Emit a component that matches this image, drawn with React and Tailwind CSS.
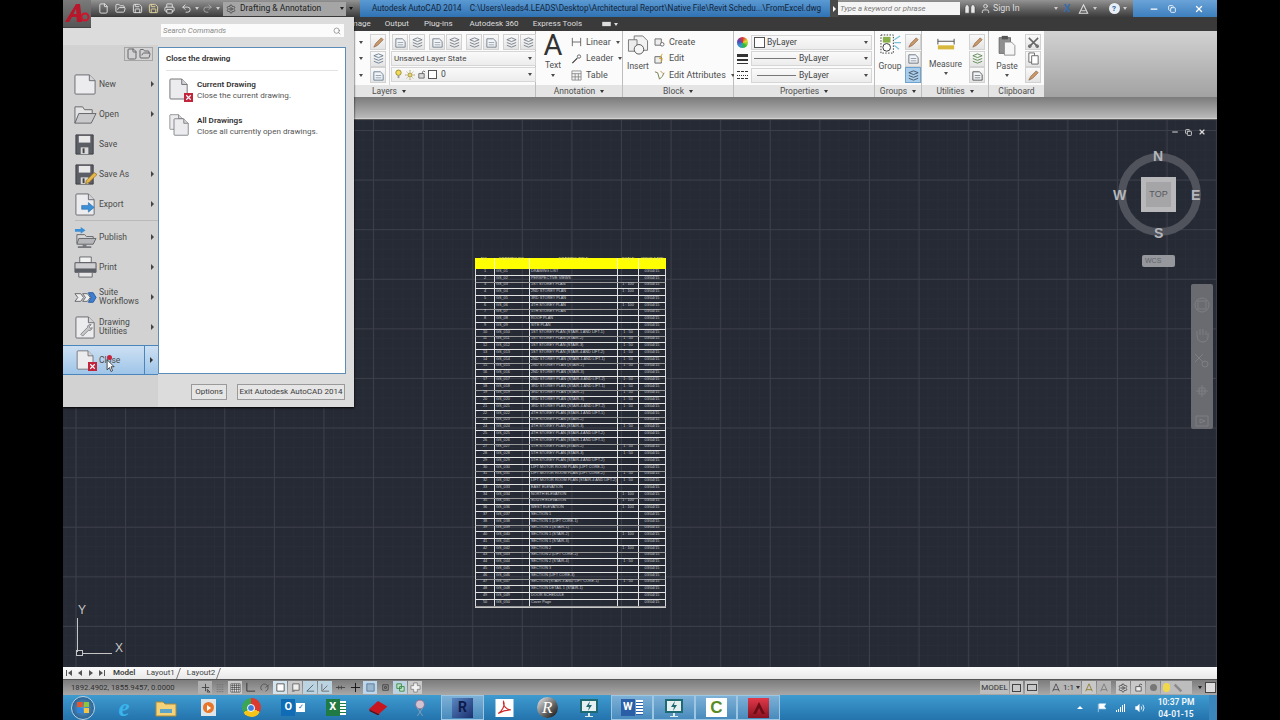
import {
  File, FolderOpen, Save, Printer, Undo2, Redo2, Settings, Search, User, Minus, X, Copy,
} from "lucide-react";

const sheets = [
  [1, "GS_01", "DRAWING LIST", ""],
  [2, "GS_02", "PERSPECTIVE VIEWS", ""],
  [3, "GS_03", "1ST STOREY PLAN", "1 : 100"],
  [4, "GS_04", "2ND STOREY PLAN", "1 : 100"],
  [5, "GS_05", "3RD STOREY PLAN", ""],
  [6, "GS_06", "4TH STOREY PLAN", "1 : 100"],
  [7, "GS_07", "5TH STOREY PLAN", ""],
  [8, "GS_08", "ROOF PLAN", ""],
  [9, "GS_09", "SITE PLAN", ""],
  [10, "GS_010", "1ST STOREY PLAN (STAIR-1 AND LIFT-1)", "1 : 50"],
  [11, "GS_011", "1ST STOREY PLAN (STAIR-2)", "1 : 50"],
  [12, "GS_012", "1ST STOREY PLAN (STAIR-3)", "1 : 50"],
  [13, "GS_013", "1ST STOREY PLAN (STAIR-4 AND LIFT-2)", "1 : 50"],
  [14, "GS_014", "2ND STOREY PLAN (STAIR-1 AND LIFT-1)", "1 : 50"],
  [15, "GS_015", "2ND STOREY PLAN (STAIR-2)", "1 : 50"],
  [16, "GS_016", "2ND STOREY PLAN (STAIR-3)", ""],
  [17, "GS_017", "2ND STOREY PLAN (STAIR-4 AND LIFT-2)", "1 : 50"],
  [18, "GS_018", "3RD STOREY PLAN (STAIR-1 AND LIFT-1)", "1 : 50"],
  [19, "GS_019", "3RD STOREY PLAN (STAIR-2)", "1 : 50"],
  [20, "GS_020", "3RD STOREY PLAN (STAIR-3)", "1 : 50"],
  [21, "GS_021", "3RD STOREY PLAN (STAIR-4 AND LIFT-2)", "1 : 50"],
  [22, "GS_022", "4TH STOREY PLAN (STAIR-1 AND LIFT-1)", ""],
  [23, "GS_023", "4TH STOREY PLAN (STAIR-2)", ""],
  [24, "GS_024", "4TH STOREY PLAN (STAIR-3)", "1 : 50"],
  [25, "GS_025", "4TH STOREY PLAN (STAIR-4 AND LIFT-2)", ""],
  [26, "GS_026", "5TH STOREY PLAN (STAIR-1 AND LIFT-1)", ""],
  [27, "GS_027", "5TH STOREY PLAN (STAIR-2)", "1 : 50"],
  [28, "GS_028", "5TH STOREY PLAN (STAIR-3)", "1 : 50"],
  [29, "GS_029", "5TH STOREY PLAN (STAIR-4 AND LIFT-2)", ""],
  [30, "GS_030", "LIFT MOTOR ROOM PLAN (LIFT CORE-1)", ""],
  [31, "GS_031", "LIFT MOTOR ROOM PLAN (LIFT CORE-2)", "1 : 50"],
  [32, "GS_032", "LIFT MOTOR ROOM PLAN (STAIR-4 AND LIFT-2)", "1 : 50"],
  [33, "GS_033", "EAST ELEVATION", ""],
  [34, "GS_034", "NORTH ELEVATION", "1 : 100"],
  [35, "GS_035", "SOUTH ELEVATION", "1 : 100"],
  [36, "GS_036", "WEST ELEVATION", "1 : 100"],
  [37, "GS_037", "SECTION 1", ""],
  [38, "GS_038", "SECTION 1 (LIFT CORE-1)", ""],
  [39, "GS_039", "SECTION 1 (STAIR-1)", ""],
  [40, "GS_040", "SECTION 1 (STAIR-2)", "1 : 100"],
  [41, "GS_041", "SECTION 1 (STAIR-3)", ""],
  [42, "GS_042", "SECTION 2", "1 : 100"],
  [43, "GS_043", "SECTION 2 (LIFT CORE-2)", ""],
  [44, "GS_044", "SECTION 2 (STAIR-4)", "1 : 50"],
  [45, "GS_045", "SECTION 3", ""],
  [46, "GS_046", "SECTION (LIFT CORE-3)", ""],
  [47, "GS_047", "SECTION (STAIR-3 AND LIFT CORE-1)", "1 : 50"],
  [48, "GS_048", "SECTION DETAIL 1 (STAIR-1)", ""],
  [49, "GS_049", "DOOR SCHEDULE", ""],
  [50, "GS_050", "Cover Page", ""],
];

// page with a folded corner, used all over the application menu
function Doc({ className = "", children }) {
  return (
    <svg viewBox="0 0 22 24" className={className}>
      <path d="M2 1h12l6 6v15a1 1 0 0 1-1 1H2a1 1 0 0 1-1-1V2a1 1 0 0 1 1-1z" fill="#ececef" stroke="#6a6b70" />
      <path d="M14 1v6h6" fill="#d4d4d8" stroke="#6a6b70" />
      {children}
    </svg>
  );
}

function RedX({ className = "" }) {
  return (
    <svg viewBox="0 0 10 10" className={className}>
      <rect width="10" height="10" fill="#c2243c" />
      <path d="M2.5 2.5l5 5M7.5 2.5l-5 5" stroke="#fff" strokeWidth="1.2" />
    </svg>
  );
}

function MenuIcon({ name }) {
  const c = "w-[23px] h-[23px]";
  if (name === "New")
    return (
      <svg viewBox="0 0 24 22" className={c}>
        <path d="M2 1h14l6 6v13a1 1 0 0 1-1 1H2a1 1 0 0 1-1-1V2a1 1 0 0 1 1-1z" fill="#ececef" stroke="#6a6b70" />
        <path d="M16 1v6h6" fill="#d4d4d8" stroke="#6a6b70" />
      </svg>
    );
  if (name === "Open")
    return (
      <svg viewBox="0 0 24 24" className={c}>
        <path d="M1 4h8l2 3h8v4H6L1 21z" fill="#e4e4e4" stroke="#66676c" />
        <path d="M5 11h18l-5 10H1z" fill="#c9c9cc" stroke="#66676c" />
      </svg>
    );
  if (name === "Save" || name === "Save As")
    return (
      <svg viewBox="0 0 24 24" className={c}>
        <path d="M2 2h18v20H2z" fill="#5c5e66" stroke="#3e3f44" />
        <path d="M5 3h12v7H5z" fill="#e8e8e8" />
        <path d="M7 15h8v7H7z" fill="#dadada" />
        <path d="M9 16h2v5H9z" fill="#444" />
        {name === "Save As" && <path d="M12 22l1-4 8-8 3 2-8 8z" fill="#e9b64a" stroke="#8a6a20" strokeWidth="0.7" />}
      </svg>
    );
  if (name === "Export")
    return (
      <Doc className={c}>
        <path d="M7 13h7v-3l6 5-6 5v-3H7z" fill="#3d8fd6" stroke="#1f6aa8" strokeWidth="0.6" />
      </Doc>
    );
  if (name === "Publish")
    return (
      <svg viewBox="0 0 24 24" className={c}>
        <path d="M3 9h8l2 2h7v7H3z" fill="#d8d8d8" stroke="#66676c" />
        <path d="M5 13h18l-3 6H3z" fill="#b6b7bb" stroke="#66676c" />
        <path d="M1 3h6V1l5 3.500-5 3.500V6H1z" fill="#3d8fd6" />
        <path d="M4 21h14v2H4zM9 19h4v2H9z" fill="#77787d" />
      </svg>
    );
  if (name === "Print")
    return (
      <svg viewBox="0 0 24 24" className={c}>
        <path d="M6 1h12v6H6z" fill="#f2f2f2" stroke="#66676c" />
        <path d="M1 7h22v10H1z" fill="#cfcfd2" stroke="#55565b" />
        <path d="M1 13h22v4H1z" fill="#5c5e66" />
        <path d="M5 17h14v5H5z" fill="#e6e6e6" stroke="#66676c" />
      </svg>
    );
  if (name === "Suite")
    return (
      <svg viewBox="0 0 24 14" className={c}>
        <path d="M1 3h6l3 4-3 4H1l3-4z" fill="#eee" stroke="#66676c" />
        <path d="M9 3h5l3 4-3 4H9l3-4z" fill="#eee" stroke="#66676c" />
        <path d="M15 2h5l3 5-3 5h-5l3-5z" fill="#3f7fd0" stroke="#2a5ea6" />
      </svg>
    );
  if (name === "Drawing")
    return (
      <Doc className={c}>
        <path d="M6 19l7-7a3 3 0 0 1 4-3l-2 2 1 2 2-1a3 3 0 0 1-4 3l-6 6z" fill="#c8c8cc" stroke="#66676c" strokeWidth="0.7" />
      </Doc>
    );
  return null;
}

const menuTop = [["New", "New", 1], ["Open", "Open", 1], ["Save", "Save", 0], ["Save As", "Save As", 1], ["Export", "Export", 1]];
const menuBottom = [
  ["Publish", ["Publish"], 1],
  ["Print", ["Print"], 1],
  ["Suite", ["Suite", "Workflows"], 1],
  ["Drawing", ["Drawing", "Utilities"], 1],
];

function MenuRow({ icon, lines, arrow }) {
  const list = Array.isArray(lines) ? lines : [lines];
  return (
    <div className="flex h-[30px] items-center pl-[9px] pr-[4px]">
      <div className="flex w-[26px] justify-center"><MenuIcon name={icon} /></div>
      <div className="ml-[1px] flex-1 text-[8.5px] leading-[9px] text-[#4b4b4b]">
        {list.map((l) => <div key={l}>{l}</div>)}
      </div>
      {arrow ? <div className="h-0 w-0 border-y-[3px] border-l-[3px] border-y-transparent border-l-[#444]" /> : null}
    </div>
  );
}

function AppMenu() {
  return (
    <div className="absolute left-0 top-0 z-20 h-[407px] w-[291px]">
      <div className="flex h-[28px] w-[28px] items-center justify-center border-b border-[#444] bg-linear-to-b from-[#7a7a7a] to-[#565656]">
        <svg viewBox="0 0 28 24" className="h-[26px] w-[28px]">
          <path d="M2 20L13 2h4l2 18h-5l-.6-5H9l-3 5z" fill="#b8162a" />
          <path d="M10.500 12h3l-.5-5z" fill="#6b6b6b" />
          <circle cx="22" cy="15" r="3.500" fill="none" stroke="#d0142a" strokeWidth="2" />
        </svg>
      </div>
      <div className="absolute inset-x-0 bottom-0 top-[17px] -z-10 bg-[#dcdcdc] shadow-[0_1px_2px_#000]" />
      <div className="absolute inset-y-0 left-0 top-[45px] -z-10 w-[95px] bg-[#d2d2d2]" />
      <div className="absolute left-[98px] top-[24px] flex h-[13px] w-[183px] items-center justify-between bg-[#fbfbfb] pl-[2px] pr-[3px]">
        <span className="text-[7.700px] italic text-[#8a8a8a]">Search Commands</span>
        <Search size={8} className="text-[#777]" />
      </div>

      <div className="absolute inset-y-0 left-0 top-[28px] w-[95px] pt-[41px]">
        <div className="absolute right-[5px] top-[19px] flex h-[14px] gap-px border border-[#a5a5a5] bg-[#d2d2d2] px-px">
          <File size={12} className="text-[#66676c]" />
          <FolderOpen size={12} className="text-[#66676c]" />
        </div>
        {menuTop.map(([icon, label, arrow]) => <MenuRow key={icon} icon={icon} lines={label} arrow={arrow} />)}
        <div className="ml-[12px] mt-px h-[1px] bg-[#b9b9b9]" />
        <div className="h-[1px]" />
        {menuBottom.map(([icon, lines, arrow]) => <MenuRow key={icon} icon={icon} lines={lines} arrow={arrow} />)}
        <div className="relative mt-[3px] flex h-[30px] border-y border-[#4a86bb] bg-linear-to-b from-[#cde0f3] to-[#9fc5e8] pl-[9px]">
          <div className="relative flex w-[26px] items-center justify-center">
            <Doc className="h-[20px] w-[19px]" />
            <RedX className="absolute bottom-[3px] right-[1px] h-[9px] w-[9px]" />
          </div>
          <div className="ml-[1px] flex flex-1 items-center text-[8.5px] text-[#4b4b4b]">Close</div>
          <div className="flex w-[14px] items-center justify-center border-l border-[#4a86bb]">
            <div className="h-0 w-0 border-y-[3px] border-l-[3px] border-y-transparent border-l-[#333]" />
          </div>
          <div className="absolute left-[44px] top-[9px] h-[5px] w-[5px] rounded-full bg-[#c8243c]" />
          <svg viewBox="0 0 12 18" className="absolute left-[43px] top-[13px] h-[14px] w-[10px]">
            <path d="M1 1v13l3-3 2 5 2-1-2-5h4z" fill="#fff" stroke="#222" />
          </svg>
        </div>
      </div>

      <div className="absolute left-[95px] top-[47px] h-[327px] w-[188px] border border-[#5b8db8] bg-white px-[7px]">
        <div className="flex h-[23px] items-center border-b border-[#e2e2e2] text-[8px] font-semibold text-[#2f2f2f]">Close the drawing</div>
        <div className="mt-[5px] flex h-[28px] items-center pl-[3px]">
          <div className="relative h-[24px] w-[24px]">
            <Doc className="h-[22px] w-[20px]" />
            <RedX className="absolute bottom-0 right-0 h-[9px] w-[9px]" />
          </div>
          <div className="ml-[4px] text-[8.100px] leading-[11px]">
            <div className="font-semibold text-[#333]">Current Drawing</div>
            <div className="text-[#555]">Close the current drawing.</div>
          </div>
        </div>
        <div className="mt-[8px] flex h-[28px] items-center pl-[3px]">
          <div className="relative h-[24px] w-[24px]">
            <Doc className="absolute left-0 top-0 h-[16px] w-[15px]" />
            <Doc className="absolute left-[4px] top-[4px] h-[18px] w-[17px]" />
          </div>
          <div className="ml-[4px] text-[8.100px] leading-[11px]">
            <div className="font-semibold text-[#333]">All Drawings</div>
            <div className="text-[#555]">Close all currently open drawings.</div>
          </div>
        </div>
      </div>

      <div className="absolute left-[128px] top-[384px] flex gap-[10px] text-[8px] text-[#3b3b3b]">
        <div className="flex h-[16px] w-[36px] items-center justify-center border border-[#9a9a9a] bg-[#e6e6e6]">Options</div>
        <div className="flex h-[16px] w-[108px] items-center justify-center whitespace-nowrap border border-[#9a9a9a] bg-[#e6e6e6]">Exit Autodesk AutoCAD 2014</div>
      </div>
    </div>
  );
}

function Caret({ className = "border-t-[#4a4a4a]" }) {
  return <span className={`inline-block h-0 w-0 border-x-[2.500px] border-t-[3px] border-x-transparent ${className}`} />;
}

// small square toolbar button on the ribbon
function Tile({ active, children }) {
  return (
    <div className={`flex h-[16px] w-[16px] items-center justify-center border ${active ? "border-[#6ea3cf] bg-[#a9cdec]" : "border-[#d2d2d2] bg-linear-to-b from-[#fafafa] to-[#e4e4e4]"}`}>
      {children}
    </div>
  );
}

function Glyph({ color = "#6a7480", kind = "box" }) {
  if (kind === "layer")
    return (
      <svg viewBox="0 0 14 14" className="h-[13px] w-[13px]">
        <path d="M2 4l5-2 5 2-5 2zM2 7l5 2 5-2M2 10l5 2 5-2" fill="none" stroke={color} />
      </svg>
    );
  if (kind === "cross")
    return (
      <svg viewBox="0 0 14 14" className="h-[13px] w-[13px]">
        <path d="M2 2l10 10M12 2L2 12" stroke={color} strokeWidth="1.600" />
        <circle cx="3" cy="11" r="1.500" fill="none" stroke={color} />
        <circle cx="11" cy="11" r="1.500" fill="none" stroke={color} />
      </svg>
    );
  if (kind === "pages")
    return (
      <svg viewBox="0 0 14 14" className="h-[13px] w-[13px]">
        <path d="M2 1h6v10H2z" fill="#fff" stroke={color} />
        <path d="M5 4h7v9H5z" fill="#fff" stroke={color} />
      </svg>
    );
  if (kind === "pen")
    return (
      <svg viewBox="0 0 14 14" className="h-[13px] w-[13px]">
        <path d="M2 12l2-4 6-6 2 2-6 6z" fill="#c89a6a" stroke="#8a5a3a" strokeWidth="0.7" />
      </svg>
    );
  return (
    <svg viewBox="0 0 14 14" className="h-[13px] w-[13px]">
      <path d="M2 3h7l3 3v6H2z" fill="#f0f4f8" stroke={color} />
      <path d="M4 7h6M4 9.500h6" stroke={color} strokeWidth="0.7" />
    </svg>
  );
}

function Combo({ className = "", children }) {
  return (
    <div className={`flex h-[15px] items-center justify-between border border-[#d6d6d6] bg-linear-to-b from-[#fafafa] to-[#ececec] pl-[2px] pr-[3px] ${className}`}>
      <div className="flex min-w-0 flex-1 items-center gap-[2px]">{children}</div>
      <Caret />
    </div>
  );
}

function Panel({ title, width, children, more }) {
  return (
    <div className={`flex flex-col border-r border-[#bdbdbd] bg-[#fbfbfb] ${width}`}>
      <div className="flex h-[54px]">{children}</div>
      <div className="flex h-[12px] flex-none items-center justify-center gap-[5px] bg-[#e4e4e4] text-[8.500px] text-[#4f4f4f]">
        {title}
        {more ? <Caret className="border-t-[#333]" /> : null}
      </div>
    </div>
  );
}

function LineRow({ label, icon, tail }) {
  return (
    <div className="flex h-[16.500px] items-center gap-[3px] whitespace-nowrap text-[9px] text-[#505050]">
      <div className="flex w-[13px] justify-center">{icon}</div>
      {label}
      {tail ? <Caret className="ml-[2px]" /> : null}
    </div>
  );
}

function TitleBar() {
  return (
    <div className="flex h-[17px] flex-none items-center bg-linear-to-b from-[#939393] to-[#3c3c3c]">
      <div className="flex w-[297px] flex-none items-center pl-[35px] text-[#e4e4e4]">
        <File size={11} />
        <FolderOpen size={11} className="ml-[6px]" />
        <Save size={11} className="ml-[6px]" />
        <Save size={11} className="ml-[5px] text-[#e7d9a2]" />
        <Printer size={11} className="ml-[5px]" />
        <Undo2 size={11} className="ml-[6px]" />
        <Caret className="ml-[3px] border-t-[#ccc]" />
        <Redo2 size={11} className="ml-[3px] text-[#aaa]" />
        <Caret className="ml-[3px] border-t-[#ccc]" />
        <div className="ml-[3px] flex h-[14px] w-[123px] flex-none items-center gap-[4px] bg-[#a5a5a5] pl-[3px] pr-[2px] text-[8.500px] text-[#222]">
          <Settings size={10} className="text-[#444]" />
          <span className="flex-1 whitespace-nowrap">Drafting &amp; Annotation</span>
          <Caret className="border-t-[#222]" />
        </div>
        <Caret className="ml-[3px] border-t-[#111]" />
      </div>
      <div className="flex h-full w-[470px] flex-none items-center overflow-hidden whitespace-nowrap bg-linear-to-b from-[#5b9ad3] to-[#2f72b3] pl-[12px] text-[8.160px] text-[#14253a]">
        <span>Autodesk AutoCAD 2014</span>
        <span className="ml-[8px]">C:\Users\leads4.LEADS\Desktop\Architectural Report\Native File\Revit Schedu...\FromExcel.dwg</span>
      </div>
      <div className="flex h-full w-[8px] flex-none items-center justify-center bg-[#4a4a4a]">
        <div className="h-0 w-0 border-y-[3px] border-l-[3px] border-y-transparent border-l-white" />
      </div>
      <div className="flex h-[13px] w-[122px] flex-none items-center overflow-hidden whitespace-nowrap bg-[#f4f4f4] pl-[2px] text-[7.800px] italic text-[#7a7a7a]">Type a keyword or phrase</div>
      <div className="flex flex-1 items-center pl-[4px] text-[#ddd]">
        <svg viewBox="0 0 14 12" className="h-[10px] w-[12px]">
          <path d="M1 11V4l1-3h3l1 3v7zM8 11V4l1-3h3l1 3v7z" fill="#e8e8e8" stroke="#333" strokeWidth="0.6" />
        </svg>
        <User size={11} className="ml-[4px]" />
        <span className="ml-[2px] text-[8.800px]">Sign In</span>
        <Caret className="ml-[34px] border-t-[#ccc]" />
        <span className="ml-[6px] text-[11px] font-bold leading-none text-[#3b6aa8]">X</span>
        <svg viewBox="0 0 12 12" className="ml-[7px] h-[10px] w-[11px]"><path d="M6 1l5 10H1zM3.500 8h5" fill="none" stroke="#ddd" strokeWidth="1.300" /></svg>
        <Caret className="ml-[4px] border-t-[#ccc]" />
        <div className="ml-[12px] flex h-[11px] w-[11px] items-center justify-center rounded-full bg-[#e8eef5] text-[8px] font-bold text-[#2b5f9e]">?</div>
        <Caret className="ml-[3px] border-t-[#ccc]" />
      </div>
      <div className="flex h-full w-[84px] flex-none items-center bg-linear-to-b from-[#6aa3d8] to-[#3d7fbe] pl-[16px] text-white">
        <Minus size={10} strokeWidth={3} />
        <Copy size={8} strokeWidth={2.500} className="ml-[9px]" />
        <X size={10} strokeWidth={3} className="ml-[18px]" />
      </div>
    </div>
  );
}

function Ribbon() {
  return (
    <>
      <div className="flex h-[14px] flex-none items-center whitespace-nowrap bg-[#3a3a3a] pl-[279px] text-[8px] text-[#dddddd]">
        <span>Manage</span>
        <span className="ml-[14px]">Output</span>
        <span className="ml-[15px]">Plug-ins</span>
        <span className="ml-[17px]">Autodesk 360</span>
        <span className="ml-[14px]">Express Tools</span>
        <svg viewBox="0 0 10 7" className="ml-[20px] h-[6px] w-[9px]"><path d="M0 1h10v5H0z" fill="#ddd" /></svg>
        <Caret className="ml-[3px] border-t-[#ddd]" />
      </div>
      <div className="flex h-[66px] flex-none bg-linear-to-b from-[#d2d2d2] to-[#a2a2a2]">
        <div className="w-[180px] flex-none bg-[#fbfbfb]" />
        <Panel title="Layers" more width="w-[293px]">
          <div className="flex w-[146px] flex-none flex-col items-end pr-[3px] pt-[3px]">
            {["pen", "layer", "box"].map((k) => (
              <div key={k} className="flex h-[16.500px] items-center gap-[7px]">
                <Caret />
                <Tile><Glyph kind={k} color="#6b7f92" /></Tile>
              </div>
            ))}
          </div>
          <div className="flex flex-1 flex-col border-l border-[#d6d6d6] pl-[1px] pr-[1px] pt-[3px]">
            <div className="flex h-[16px] gap-[1px] pl-[1px]">
              {["box", "layer", "box", "layer", "layer", "box", "layer", "layer"].map((k, i) => (
                <div key={i} className={i === 2 || i === 4 || i === 6 ? "ml-[3px]" : ""}><Tile><Glyph kind={k} color="#77808a" /></Tile></div>
              ))}
            </div>
            <Combo className="mt-[1px] whitespace-nowrap text-[8px] text-[#444]">Unsaved Layer State</Combo>
            <Combo className="mt-[1px] text-[8.500px] text-[#444]">
              <svg viewBox="0 0 10 12" className="h-[11px] w-[9px]"><circle cx="5" cy="4" r="3" fill="#f2da58" stroke="#9a8a2a" /><path d="M4 7v3h2V7" fill="#999" /></svg>
              <svg viewBox="0 0 12 12" className="h-[10px] w-[10px]"><circle cx="6" cy="6" r="2.500" fill="#e8d27a" stroke="#9a8a2a" /><path d="M6 0v2M6 10v2M0 6h2M10 6h2M2 2l1 1M9 9l1 1M2 10l1-1M9 3l1-1" stroke="#a59a5a" /></svg>
              <svg viewBox="0 0 10 10" className="h-[9px] w-[9px]"><path d="M2 4h6v5H2z" fill="#d9d9d9" stroke="#666" /><path d="M6 4V2a2 2 0 0 1 3 0" fill="none" stroke="#666" /></svg>
              <span className="h-[9px] w-[9px] border border-[#555] bg-white" />
              <span className="ml-[2px]">0</span>
            </Combo>
          </div>
        </Panel>
        <Panel title="Annotation" more width="w-[87px]">
          <div className="relative w-[34px] flex-none text-center text-[8.500px] text-[#505050]">
            <span className="absolute inset-x-0 top-[-1px] text-[29px] leading-[30px] text-[#333]">A</span>
            <span className="absolute inset-x-0 top-[29px] leading-[10px]">Text</span>
            <span className="absolute inset-x-0 top-[40px] leading-[6px]"><Caret /></span>
          </div>
          <div className="pt-[3px]">
            <LineRow label="Linear" tail icon={<svg viewBox="0 0 12 12" className="h-[10px] w-[11px]"><path d="M1 1v10M11 1v10M1 6h10" stroke="#555" fill="none" /></svg>} />
            <LineRow label="Leader" tail icon={<svg viewBox="0 0 12 12" className="h-[10px] w-[11px]"><path d="M1 11l6-6" stroke="#333" strokeWidth="1.300" /><circle cx="9" cy="3" r="2" fill="none" stroke="#555" /></svg>} />
            <LineRow label="Table" icon={<svg viewBox="0 0 12 12" className="h-[11px] w-[11px]"><path d="M1 1h10v10H1zM1 4h10M1 7.500h10M4.500 4v7M8 4v7" fill="#f4f4f4" stroke="#777" strokeWidth="0.8" /></svg>} />
          </div>
        </Panel>
        <Panel title="Block" more width="w-[111px]">
          <div className="flex w-[30px] flex-none flex-col items-center pt-[4px] text-[8.500px] text-[#505050]">
            <svg viewBox="0 0 22 22" className="h-[21px] w-[22px]">
              <path d="M7 1h9l5 5v10H7z" fill="#f2f2f2" stroke="#777" />
              <path d="M1 5h9v12H1z" fill="#ececec" stroke="#777" />
              <circle cx="12" cy="15" r="5" fill="#f6f6f6" stroke="#555" />
            </svg>
            <span className="mt-[5px] leading-[10px]">Insert</span>
          </div>
          <div className="pt-[3px]">
            <LineRow label="Create" icon={<svg viewBox="0 0 12 10" className="h-[9px] w-[11px]"><path d="M1 1h7v7H1z" fill="#eee" stroke="#666" /><circle cx="9" cy="7" r="2" fill="#fff" stroke="#666" /></svg>} />
            <LineRow label="Edit" icon={<svg viewBox="0 0 12 12" className="h-[11px] w-[11px]"><path d="M1 4h7v7H1z" fill="#eee" stroke="#666" /><path d="M9 1l-3 5h3l-1 4" fill="none" stroke="#d2a21e" /></svg>} />
            <LineRow label="Edit Attributes" tail icon={<svg viewBox="0 0 12 12" className="h-[11px] w-[11px]"><path d="M1 2l3 1 2 7 3-3 2-4" fill="none" stroke="#6f7a40" /><path d="M7 1l3 3" stroke="#c08a30" /></svg>} />
          </div>
        </Panel>
        <Panel title="Properties" more width="w-[141px]">
          <div className="flex w-full flex-col pr-[2px] pt-[3px]">
            {[0, 1, 2].map((i) => (
              <div key={i} className="flex h-[16.500px] items-center">
                <div className="flex w-[17px] flex-none justify-center">
                  {i === 0 && <div className="h-[11px] w-[11px] rounded-full bg-[conic-gradient(#d33,#dd3,#3b3,#39c,#54b,#d33)]" />}
                  {i === 1 && <div className="flex h-[10px] w-[11px] flex-col justify-between"><div className="h-[3px] bg-[#333]" /><div className="h-[2px] bg-[#333]" /><div className="h-px bg-[#333]" /></div>}
                  {i === 2 && <div className="flex h-[8px] w-[11px] flex-col justify-between"><div className="border-t border-dashed border-[#333]" /><div className="border-t border-dotted border-[#333]" /><div className="border-t border-dashed border-[#333]" /></div>}
                </div>
                <Combo className="flex-1 text-[8.500px] text-[#444]">
                  {i === 0 ? (
                    <>
                      <span className="h-[11px] w-[11px] border border-[#555] bg-white" />
                      <span>ByLayer</span>
                    </>
                  ) : (
                    <>
                      <span className={`h-px bg-[#777] ${i === 1 ? "w-[42px]" : "ml-[3px] w-[39px]"}`} />
                      <span className="ml-[1px]">ByLayer</span>
                    </>
                  )}
                </Combo>
              </div>
            ))}
          </div>
        </Panel>
        <Panel title="Groups" more width="w-[47px]">
          <div className="flex w-[30px] flex-none flex-col items-center pt-[3px] text-[8.500px] text-[#505050]">
            <svg viewBox="0 0 22 22" className="h-[21px] w-[21px]">
              <path d="M1 1h13v19H1z" fill="none" stroke="#333" strokeDasharray="1.500 1.500" />
              <rect x="3" y="3" width="8" height="6" fill="#8ab04a" />
              <circle cx="7" cy="14" r="4" fill="#fff" stroke="#333" />
              <path d="M15 6l6-4M15 9h7M15 12l5 4" stroke="#7ac0dc" strokeWidth="1.200" />
            </svg>
            <span className="mt-[6px] leading-[10px]">Group</span>
          </div>
          <div className="pt-[3px]">
            <div className="h-[16.500px]"><Tile><Glyph kind="pen" /></Tile></div>
            <div className="h-[16.500px]"><Tile><Glyph /></Tile></div>
            <div className="h-[16.500px]"><Tile active><Glyph kind="layer" color="#465563" /></Tile></div>
          </div>
        </Panel>
        <Panel title="Utilities" more width="w-[67px]">
          <div className="flex w-[47px] flex-none flex-col items-center pt-[7px] text-[8.500px] text-[#505050]">
            <svg viewBox="0 0 22 16" className="h-[13px] w-[22px]">
              <path d="M1 1v7M21 1v7M1 4h20" stroke="#333" fill="none" />
              <rect x="1" y="9" width="20" height="5" fill="#d8b83c" />
            </svg>
            <span className="mt-[8px] leading-[10px]">Measure</span>
            <Caret className="mt-[3px]" />
          </div>
          <div className="pt-[3px]">
            <div className="h-[16.500px]"><Tile><Glyph kind="pen" /></Tile></div>
            <div className="h-[16.500px]"><Tile><Glyph kind="layer" color="#5c8a50" /></Tile></div>
            <div className="h-[16.500px]"><Tile><Glyph color="#555" /></Tile></div>
          </div>
        </Panel>
        <Panel title="Clipboard" width="w-[55px] border-r-0">
          <div className="flex w-[36px] flex-none flex-col items-center pt-[4px] text-[8.500px] text-[#505050]">
            <svg viewBox="0 0 20 24" className="h-[21px] w-[18px]">
              <path d="M1 3h13v18H1z" fill="#8f8f8f" stroke="#666" />
              <path d="M4 1h7v4H4z" fill="#555" />
              <path d="M7 8h8l4 4v11H7z" fill="#f6f6f6" stroke="#888" />
            </svg>
            <span className="mt-[5px] leading-[10px]">Paste</span>
            <Caret className="mt-[3px]" />
          </div>
          <div className="pt-[3px]">
            <div className="h-[16.500px]"><Tile><Glyph kind="cross" color="#666" /></Tile></div>
            <div className="h-[16.500px]"><Tile><Glyph kind="pages" color="#666" /></Tile></div>
            <div className="h-[16.500px]"><Tile><Glyph kind="pen" /></Tile></div>
          </div>
        </Panel>
      </div>
      <div className="h-[23px] flex-none border-b border-[#5c5c5c] bg-linear-to-b from-[#7b7b7b] to-[#bdbdbd] shadow-[inset_0_-1px_0_#d0d0d0]" />
    </>
  );
}

function SheetTable() {
  return (
    <div className="absolute left-[412px] top-[138px] w-[191px] border-b border-[#c8c8c8] font-['Liberation_Sans',sans-serif] text-[3.800px] leading-none text-[#c9cbd2]">
      <div className="flex h-[11px] bg-[#ffff00] text-center text-[#e9e97a]">
        <div className="w-[20px] border-r border-white/70">NO.</div>
        <div className="w-[35px] border-r border-white/70">DRAWING NO.</div>
        <div className="w-[88px] border-r border-white/70">DRAWING TITLE</div>
        <div className="w-[21px] border-r border-white/70">SCALE</div>
        <div className="flex-1">ISSUE DATE</div>
      </div>
      {sheets.map(([no, code, title, scale], i) => (
        <div key={no} className={`flex h-[6.760px] items-center border-x border-b border-x-[#d8d8d8] ${i % 4 === 1 ? "border-b-[#9a9a9a]" : "border-b-[#e4e4e4]"}`}>
          <div className="flex h-full w-[19px] items-center justify-center border-r border-[#e4e4e4]">{no}</div>
          <div className="flex h-full w-[35px] items-center border-r border-[#e4e4e4] pl-[1px]">{code}</div>
          <div className="flex h-full w-[88px] items-center overflow-hidden whitespace-nowrap border-r border-[#e4e4e4] pl-[1px]">{title}</div>
          <div className="flex h-full w-[21px] items-center justify-center border-r border-[#e4e4e4]">{scale}</div>
          <div className="flex-1 text-center">03/04/15</div>
        </div>
      ))}
    </div>
  );
}

function Canvas() {
  return (
    <div className="relative min-h-0 flex-1 overflow-hidden bg-[#262a34] bg-[linear-gradient(#3c3f49_1px,transparent_1px),linear-gradient(90deg,#3c3f49_1px,transparent_1px),linear-gradient(#292d37_1px,transparent_1px),linear-gradient(90deg,#292d37_1px,transparent_1px)] bg-[size:49.600px_49.600px,49.600px_49.600px,9.920px_9.920px,9.920px_9.920px] bg-[position:10px_10px,12.500px_10px,0_0,2.500px_0]">
      <SheetTable />

      <div className="absolute right-[11px] top-[8px] flex items-center gap-[6px] text-[#d8d8d8]">
        <Minus size={8} strokeWidth={3.500} />
        <Copy size={7} strokeWidth={3} />
        <X size={8} strokeWidth={3.500} />
      </div>

      {/* view cube */}
      <div className="absolute left-[1054px] top-[32px] h-[85px] w-[85px] font-['Liberation_Sans',sans-serif] text-[14px] font-bold text-[#b4b6bb]">
        <div className="absolute inset-[1px] rounded-full border-[8px] border-[#50535b]" />
        <div className="absolute left-[24px] top-[25px] flex h-[35px] w-[35px] items-center justify-center border-[5px] border-[#b8b8ba] bg-[#a5a5a8] text-[9px] font-normal text-[#55575d]">TOP</div>
        <span className="absolute left-[36px] top-[-4px] leading-[16px]">N</span>
        <span className="absolute left-[37px] top-[73px] leading-[16px]">S</span>
        <span className="absolute left-[-4px] top-[35px] leading-[16px]">W</span>
        <span className="absolute left-[74px] top-[35px] leading-[16px]">E</span>
      </div>
      <div className="absolute left-[1079px] top-[135px] flex h-[12px] w-[33px] items-center rounded-[2px] bg-[#95979d] pl-[3px] font-['Liberation_Sans',sans-serif] text-[7px] text-[#62646a]">WCS</div>

      {/* navigation bar */}
      <div className="absolute left-[1128px] top-[164px] flex h-[145px] w-[22px] flex-col items-center gap-[10px] rounded-[2px] bg-[#696b70] pt-[13px] text-[#7d7f84]">
        <svg viewBox="0 0 16 16" className="h-[16px] w-[16px]"><circle cx="8" cy="8" r="7" fill="none" stroke="currentColor" /><rect x="4" y="4" width="8" height="8" fill="none" stroke="currentColor" /></svg>
        <svg viewBox="0 0 16 16" className="mt-[4px] h-[16px] w-[16px]"><path d="M3 8V4M6 8V2M9 8V2M12 8V4M3 8q0 7 6 7t5-9" fill="none" stroke="currentColor" /></svg>
        <svg viewBox="0 0 16 16" className="h-[16px] w-[16px]"><path d="M1 1l8 8M9 1L1 9" stroke="currentColor" /><circle cx="11" cy="11" r="3" fill="none" stroke="currentColor" /></svg>
        <svg viewBox="0 0 16 16" className="mt-[4px] h-[16px] w-[16px]"><path d="M8 2v12M2 8h12M5 5h6v6H5z" fill="none" stroke="currentColor" /></svg>
        <svg viewBox="0 0 16 16" className="mt-[4px] h-[16px] w-[16px]"><path d="M2 3h12v10H2zM6 6l5 2-5 2z" fill="none" stroke="currentColor" /></svg>
      </div>

      {/* UCS icon */}
      <div className="absolute left-[13px] top-[484px] h-[52px] w-[49px] font-['Liberation_Sans',sans-serif] text-[#c6c6c6]">
        <span className="absolute left-[2px] top-0 text-[12px] leading-[12px]">Y</span>
        <span className="absolute left-[39px] top-[38px] text-[12px] leading-[12px]">X</span>
        <div className="absolute bottom-[4px] left-[1px] h-[34px] w-px bg-[#c6c6c6]" />
        <div className="absolute bottom-[2px] left-[6px] h-px w-[30px] bg-[#c6c6c6]" />
        <div className="absolute bottom-0 left-0 h-[6px] w-[7px] border border-[#c6c6c6]" />
      </div>
    </div>
  );
}

function NavArrow({ d }) {
  return <svg viewBox="0 0 8 8" className="h-[8px] w-[8px] text-[#555]"><path d={d} fill="currentColor" /></svg>;
}

function LayoutTabs() {
  return (
    <div className="flex h-[12px] flex-none items-center bg-linear-to-b from-[#fbfbfb] to-[#e9e9e9] pl-[2px] text-[8px] text-[#3f3f3f]">
      <div className="flex w-[44px] gap-[3px]">
        <NavArrow d="M1 1h1v6H1zM7 1v6L3 4z" />
        <NavArrow d="M6 1v6L2 4z" />
        <NavArrow d="M2 1v6l4-3z" />
        <NavArrow d="M7 1h-1v6h1zM1 1v6l4-3z" />
      </div>
      <span className="ml-[4px] font-semibold">Model</span>
      <span className="ml-[11px] text-[#444]">Layout1</span>
      <span className="ml-[3px] h-[11px] w-px skew-x-[-20deg] bg-[#777]" />
      <span className="ml-[8px] text-[#444]">Layout2</span>
      <span className="ml-[3px] h-[11px] w-px skew-x-[-20deg] bg-[#777]" />
    </div>
  );
}

const statusIcons = [
  <path key="a" d="M2 6h8M6 2v8M8 8l3 3h-3z" stroke="#444" fill="none" />,
  <path key="b" d="M2 3h8M2 5.500h8M2 8h8M2 10.500h8" stroke="#666" strokeDasharray="1 1" fill="none" />,
  <path key="c" d="M1 2h10v9H1zM1 4h10M1 6h10M1 8h10M3 2v9M5 2v9M7 2v9M9 2v9" stroke="#333" strokeWidth="0.7" fill="#fff" />,
  <path key="d" d="M2 1v9h9" stroke="#333" fill="none" />,
  <path key="e" d="M2 9a4 4 0 1 1 4 1M6 6l4-3" stroke="#555" fill="none" />,
  <path key="f" d="M2 2h8v8H2z" stroke="#555" fill="#fff" />,
  <path key="g" d="M3 2h7v7H3zM2 10h3" stroke="#666" fill="#eee" />,
  <path key="h" d="M2 10L9 3M2 10h8" stroke="#4a6a7a" fill="none" />,
  <path key="i" d="M2 2v8h8M3 9l5-5" stroke="#6a6a6a" fill="none" />,
  <path key="j" d="M1 6h10M4 4v4M7 4v4" stroke="#444" fill="none" />,
  <path key="k" d="M6 1v10M1 6h10" stroke="#111" fill="none" />,
  <path key="l" d="M2 2h8v8H2z" stroke="#5c7a96" fill="#9bb7d0" />,
  <path key="m" d="M3 3h6v6H3zM5 5h2v2H5z" stroke="#444" fill="none" />,
  <path key="n" d="M2 2h5v5H2zM5 5h5v5H5z" stroke="#3a8a4a" fill="#bfe2c8" />,
  <path key="o" d="M4 1h4v3h3v4H8v3H4V8H1V4h3z" stroke="#888" fill="#f2f2f2" />,
];
const statusBg = ["bg-[#b0b0b0]", "bg-transparent", "bg-[#c8c8c8]", "bg-transparent", "bg-transparent", "bg-[#d4e4ee]", "bg-[#c8c8c8]", "bg-[#bcd3e2]", "bg-[#bcd3e2]", "bg-transparent", "bg-transparent", "bg-[#bcd6ec]", "bg-transparent", "bg-[#bcd3e2]", "bg-[#c8c8c8]"];

function StatusBar() {
  return (
    <div className="flex h-[16px] flex-none items-center justify-between border-t border-[#555] bg-linear-to-b from-[#7c7c7c] to-[#a8a8a8]">
      <div className="flex items-center">
        <span className="w-[135px] whitespace-nowrap pl-[8px] text-[7.700px] text-[#2e2e2e]">1892.4902, 1855.9457, 0.0000</span>
        <div className="flex items-center gap-[1px]">
          {statusIcons.map((icon, i) => (
            <div key={i} className={`flex h-[13px] w-[14px] items-center justify-center ${statusBg[i]}`}>
              <svg viewBox="0 0 12 12" className="h-[11px] w-[11px]">{icon}</svg>
            </div>
          ))}
        </div>
      </div>
      <div className="flex items-center text-[8px] text-[#333]">
        <div className="flex h-[13px] w-[29px] items-center justify-center bg-[#bdbdbd]">MODEL</div>
        <div className="ml-px flex h-[13px] w-[13px] items-center justify-center bg-[#c8c8c8]"><span className="h-[8px] w-[9px] border border-[#444]" /></div>
        <div className="ml-[2px] flex h-[13px] w-[13px] items-center justify-center bg-[#c8c8c8]"><span className="h-[7px] w-[10px] border border-[#444]" /></div>
        <div className="ml-[12px] flex h-[13px] w-[31px] items-center justify-center gap-[2px] bg-[#b5b5b5]">
          <svg viewBox="0 0 12 12" className="h-[10px] w-[10px]"><path d="M6 1l4 9M6 1L2 10M3 8h6" stroke="#444" fill="none" /></svg>
          1:1 <Caret className="border-t-[#333]" />
        </div>
        <div className="ml-[1px] flex h-[13px] w-[14px] items-center justify-center bg-[#c8c8c8]">
          <svg viewBox="0 0 12 12" className="h-[10px] w-[10px]"><path d="M6 1l4 9M6 1L2 10M3 8h6" stroke="#8a7a2a" fill="none" /></svg>
        </div>
        <div className="ml-px flex h-[13px] w-[14px] items-center justify-center bg-[#b5b5b5]">
          <svg viewBox="0 0 12 12" className="h-[10px] w-[10px]"><path d="M6 1l4 9M6 1L2 10M3 8h6" stroke="#777" fill="none" /></svg>
        </div>
        <div className="ml-[5px] flex h-[13px] w-[14px] items-center justify-center bg-[#c8c8c8]"><Settings size={10} className="text-[#444]" /></div>
        <div className="ml-px flex h-[13px] w-[14px] items-center justify-center bg-[#c8c8c8]">
          <svg viewBox="0 0 10 10" className="h-[9px] w-[9px]"><path d="M2 4h6v5H2z" fill="#eee" stroke="#555" /><path d="M6 4V2a2 2 0 0 1 3 0" fill="none" stroke="#555" /></svg>
        </div>
        <div className="ml-px flex h-[13px] w-[14px] items-center justify-center bg-[#b5b5b5]"><span className="h-[7px] w-[7px] rounded-full bg-[#777]" /></div>
        <div className="ml-px flex h-[13px] w-[31px] items-center gap-[3px] bg-[#bdbdbd] pl-[2px]">
          <span className="h-[9px] w-[7px] rounded-full bg-[#f0d84a]" />
          <svg viewBox="0 0 12 12" className="h-[10px] w-[10px]"><path d="M2 2l8 8" stroke="#8a8a8a" strokeWidth="3" /></svg>
        </div>
        <Caret className="ml-[6px] border-t-[#222]" />
        <div className="ml-[3px] mr-px h-[11px] w-[11px] border border-[#444] bg-[#ddd]" />
      </div>
    </div>
  );
}

function AppTile({ active, children }) {
  return (
    <div className={`flex h-[25px] w-[42.300px] flex-none items-center justify-center ${active ? "bg-linear-to-b from-[#7fb2d8] to-[#4589bb] shadow-[inset_0_0_0_1px_#9cc6e2]" : ""}`}>
      {children}
    </div>
  );
}

function Letter({ bg, text, fg = "text-white", extra = "" }) {
  return <div className={`flex h-[17px] w-[14px] items-center justify-center text-[11px] font-bold ${bg} ${fg} ${extra}`}>{text}</div>;
}

function Monitor({ active }) {
  return (
    <AppTile active={active}>
      <svg viewBox="0 0 20 20" className="h-[20px] w-[20px]">
        <path d="M1 1h18v14H1z" fill="#1f6a72" />
        <path d="M3 3h14v10H3z" fill="#e6f0f0" />
        <path d="M11 3L7 9h3l-1 4 4-6h-3z" fill="#1f6a72" />
        <path d="M9 15h2v3h3v1H6v-1h3z" fill="#dfeaea" />
      </svg>
    </AppTile>
  );
}

function Taskbar() {
  return (
    <div className="flex h-[25px] flex-none items-center overflow-hidden bg-linear-to-b from-[#3e9bd0] to-[#2473ad]">
      <div className="flex w-[40px] flex-none justify-center">
        <div className="flex h-[24px] w-[24px] items-center justify-center rounded-full border border-[#b9d4e4] bg-radial from-[#5a9ccc] to-[#1c4f80]">
          <div className="grid h-[11px] w-[12px] grid-cols-2 gap-px">
            <span className="bg-[#e4572e]" />
            <span className="bg-[#8cc63f]" />
            <span className="bg-[#2e86de]" />
            <span className="bg-[#f6c343]" />
          </div>
        </div>
      </div>
      <AppTile><span className="font-['Liberation_Serif',serif] text-[25px] font-bold italic leading-[20px] text-[#3ab4ea]">e</span></AppTile>
      <AppTile>
        <svg viewBox="0 0 22 18" className="h-[18px] w-[22px]"><path d="M1 3h7l2 2h11v12H1z" fill="#f4d27a" stroke="#a88a3a" /><path d="M5 10h12v4H5z" fill="#5ca4c8" /></svg>
      </AppTile>
      <AppTile>
        <div className="flex h-[17px] w-[15px] items-center justify-center bg-[#dbe5ea]">
          <div className="flex h-[11px] w-[11px] items-center justify-center rounded-full bg-[#e8762a]"><div className="h-0 w-0 border-y-[3px] border-l-[4px] border-y-transparent border-l-white" /></div>
        </div>
      </AppTile>
      <AppTile>
        <div className="flex h-[19px] w-[19px] items-center justify-center rounded-full bg-[conic-gradient(#db3a2e_0_33%,#f7c518_33%_66%,#3aa655_66%)]">
          <div className="h-[8px] w-[8px] rounded-full border border-white bg-[#3f7fe0]" />
        </div>
      </AppTile>
      <AppTile><Letter bg="bg-[#0f6cb5]" text="O" extra="mr-[1px]" /><span className="flex h-[9px] w-[9px] items-center justify-center bg-white text-[7px] leading-none text-[#0f6cb5]">✓</span></AppTile>
      <AppTile><Letter bg="bg-[#1f7a43]" text="X" /><span className="h-[14px] w-[6px] bg-[repeating-linear-gradient(#fff_0_2px,#1f7a43_2px_3px)]" /></AppTile>
      <AppTile>
        <svg viewBox="0 0 22 16" className="h-[15px] w-[22px]"><path d="M1 10L11 1l10 6-9 8z" fill="#c7161d" /><path d="M2 11l10 5" stroke="#680a0e" strokeWidth="1.500" /></svg>
      </AppTile>
      <AppTile>
        <svg viewBox="0 0 18 20" className="h-[20px] w-[16px]"><circle cx="9" cy="6" r="5" fill="#d3c2d2" stroke="#8a6a8a" /><path d="M6 10l6 9M12 10l-6 9" stroke="#88a0b8" /></svg>
      </AppTile>
      <AppTile active><div className="flex h-[20px] w-[21px] items-center justify-center bg-linear-to-br from-[#5a88c4] to-[#1c2f6e] text-[14px] font-bold text-[#0e1a4a]">R</div></AppTile>
      <AppTile>
        <svg viewBox="0 0 20 20" className="h-[18px] w-[19px]"><rect width="20" height="20" fill="#fff" /><path d="M3 16c4-2 8-9 6-13-1 4 3 9 8 9-4 0-9 1-14 4z" fill="none" stroke="#cf2a2a" strokeWidth="1.300" /></svg>
      </AppTile>
      <AppTile><div className="flex h-[21px] w-[21px] items-center justify-center rounded-full bg-linear-to-br from-[#f2f2f2] to-[#111] font-['Liberation_Serif',serif] text-[17px] italic leading-[20px] text-white">R</div></AppTile>
      <Monitor />
      <AppTile active><Letter bg="bg-[#2a5ea6]" text="W" extra="mr-[1px]" /><span className="h-[15px] w-[7px] bg-[repeating-linear-gradient(#fff_0_2px,#2a5ea6_2px_3px)]" /></AppTile>
      <Monitor active />
      <AppTile active>
        <div className="flex h-[19px] w-[21px] items-center justify-center bg-white font-['Liberation_Sans',sans-serif] text-[17px] font-bold leading-none text-[#5a8a24]">C</div>
      </AppTile>
      <AppTile active>
        <div className="flex h-[20px] w-[21px] items-center justify-center bg-linear-to-b from-[#e2394a] to-[#8a1220]">
          <svg viewBox="0 0 14 14" className="h-[14px] w-[14px]"><path d="M7 1l6 12h-3L7 7l-3 6H1z" fill="#6d0c16" /></svg>
        </div>
      </AppTile>
      <div className="flex-1" />
      <div className="flex items-center pr-[14px] text-white">
        <div className="mr-[14px] h-0 w-0 border-x-[3px] border-b-[3px] border-x-transparent border-b-white" />
        <svg viewBox="0 0 12 12" className="mr-[8px] h-[10px] w-[11px]"><path d="M1 1v10M2 1h8l-2 3 2 3H2z" fill="#fff" stroke="#fff" strokeWidth="0.6" /></svg>
        <div className="mr-[9px] flex h-[8px] items-end gap-px">
          {[2, 3, 5, 7, 8].map((h) => <span key={h} className="w-px bg-white" style={{ height: h }} />)}
        </div>
        <svg viewBox="0 0 12 12" className="mr-[12px] h-[10px] w-[11px]"><path d="M1 4h2l3-3v10L3 8H1z" fill="#fff" /><path d="M8 4q1.500 2 0 4M10 2q3 4 0 8" fill="none" stroke="#fff" /></svg>
        <div className="w-[38px] text-center text-[8.5px] font-semibold leading-[12px] text-[#f2f7fb]">
          <div>10:37 PM</div>
          <div>04-01-15</div>
        </div>
      </div>
      <div className="h-full w-[8px] flex-none bg-[#3b86bd]" />
    </div>
  );
}

export default function App() {
  return (
    <div className="flex h-[720px] w-[1280px] overflow-hidden bg-black font-['Roboto',sans-serif]">
      <div className="relative ml-[63px] flex h-full w-[1154px] flex-col bg-[#262a34]">
        <TitleBar />
        <Ribbon />
        <Canvas />
        <LayoutTabs />
        <StatusBar />
        <Taskbar />
        <AppMenu />
      </div>
    </div>
  );
}
